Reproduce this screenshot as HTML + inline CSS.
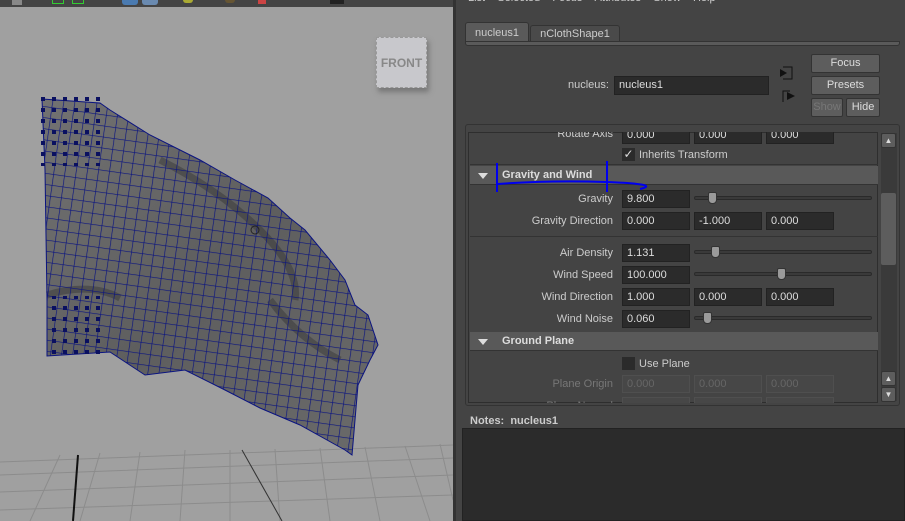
<!DOCTYPE html>
<html><head><meta charset="utf-8"><style>
*{margin:0;padding:0;box-sizing:border-box}
body{width:905px;height:521px;overflow:hidden;background:#444;font-family:"Liberation Sans",sans-serif;font-size:11px;color:#ccc;position:relative}
.a{position:absolute}
.f{position:absolute;background:#2b2b2b;border:1px solid #222;color:#ddd;height:18px;line-height:17px;padding-left:4px;font-size:11px}
.d{background:#474747;border-color:#4f4f4f;color:#666}
.l{position:absolute;text-align:right;width:150px;color:#ccc}
.btn{position:absolute;background:#5d5d5d;border:1px solid #333;border-radius:2px;text-align:center;line-height:17px;color:#ddd;height:19px}
.sl{position:absolute;height:4px;background:#3a3a3a;border:1px solid #2a2a2a;border-radius:2px}
.th{position:absolute;width:9px;height:12px;background:#9a9a9a;border:1px solid #333;border-radius:2px 2px 4px 4px}
.hd{position:absolute;left:470px;width:408px;height:19px;background:#595959;font-weight:bold;color:#ddd;line-height:19px;border-bottom:1px solid #333}
.hd i{position:absolute;left:8px;top:7px;width:0;height:0;border-left:5px solid transparent;border-right:5px solid transparent;border-top:6px solid #ddd}
.hd span{position:absolute;left:32px}
#clip{position:absolute;left:0;top:0;width:905px;height:521px;clip-path:inset(132px 27px 118px 468px)}
</style></head><body>
<div class="a" style="left:0;top:0;width:453px;height:521px;background:#a0a0a0;overflow:hidden">
<div class="a" style="left:0;top:0;width:453px;height:7px;background:#444"></div>
<div class="a" style="left:12px;top:0;width:10px;height:5px;background:#888"></div>
<div class="a" style="left:52px;top:0;width:12px;height:4px;border:1px solid #3c3;border-top:none"></div>
<div class="a" style="left:72px;top:0;width:12px;height:4px;border:1px solid #3c3;border-top:none"></div>
<div class="a" style="left:122px;top:0;width:16px;height:5px;background:#4a7ab0;border-radius:0 0 3px 3px"></div>
<div class="a" style="left:142px;top:0;width:16px;height:5px;background:#6a8ab0;border-radius:0 0 3px 3px"></div>
<div class="a" style="left:183px;top:0;width:10px;height:3px;background:#aa3;border-radius:0 0 5px 5px"></div>
<div class="a" style="left:225px;top:0;width:10px;height:3px;background:#653;border-radius:0 0 5px 5px"></div>
<div class="a" style="left:258px;top:0;width:8px;height:4px;background:#c44"></div>
<div class="a" style="left:330px;top:0;width:14px;height:4px;background:#222"></div>
<svg class="a" style="left:0;top:0" width="453" height="521">
<defs>
<pattern id="g" width="11" height="11" patternUnits="userSpaceOnUse" patternTransform="rotate(8)">
<path d="M0 0H11M0 0V11" stroke="#0a1380" stroke-width="1.3" fill="none"/></pattern>
<pattern id="dt" width="11" height="11" patternUnits="userSpaceOnUse" x="41" y="97">
<rect x="0" y="0" width="4" height="4" fill="#0a1060"/></pattern>
<linearGradient id="sh" x1="0" y1="0" x2="1" y2="1">
<stop offset="0" stop-color="#727272"/><stop offset=".5" stop-color="#5e5e5e"/><stop offset="1" stop-color="#6a6a6a"/></linearGradient>
</defs>
<g stroke="#8c8c8c" stroke-width="1">
<path d="M0 462L453 445M0 475L453 458M0 492L453 475M0 510L453 495"/>
<path d="M30 521L60 455M80 521L100 453M130 521L140 452M180 521L185 450M230 521L230 450M280 521L275 449M330 521L320 448M380 521L365 447M430 521L405 446M453 500L440 444"/>
</g>
<path d="M78 455L73 521" stroke="#111" stroke-width="2"/>
<path d="M242 450L282 521" stroke="#333" stroke-width="1"/>
<path d="M42 99L100 103L110 110L150 135L200 160L235 180L268 198L290 218L305 230L330 260L345 280L355 305L368 315L378 345L370 360L358 385L355 420L352 455L345 450L300 425L260 408L225 390L185 370L145 375L110 352L47 356L47 300L45 170Z" fill="url(#sh)"/>
<path d="M160 160Q220 190 260 230T295 300M47 295Q90 282 120 298M270 300Q300 340 340 360" stroke="#333" stroke-width="7" opacity=".45" fill="none"/>
<path d="M42 99L100 103L110 110L150 135L200 160L235 180L268 198L290 218L305 230L330 260L345 280L355 305L368 315L378 345L370 360L358 385L355 420L352 455L345 450L300 425L260 408L225 390L185 370L145 375L110 352L47 356L47 300L45 170Z" fill="url(#g)" stroke="#0a1380"/>
<rect x="40" y="96" width="64" height="70" fill="url(#dt)"/>
<rect x="45" y="296" width="62" height="62" fill="url(#dt)"/>
<circle cx="255" cy="230" r="4" fill="none" stroke="#222"/>
</svg>
<div class="a" style="left:376px;top:37px;width:51px;height:51px;background:#c8c8cc;border:1px dashed #999;box-shadow:2px 4px 5px #777;color:#888;font-weight:bold;font-size:12px;text-align:center;line-height:51px">FRONT</div>
</div>
<div class="a" style="left:453px;top:0;width:3px;height:521px;background:#333"></div>
<div class="a" style="left:468px;top:-8px;color:#ccc">List&nbsp;&nbsp;&nbsp;&nbsp;Selected&nbsp;&nbsp;&nbsp;&nbsp;Focus&nbsp;&nbsp;&nbsp;&nbsp;Attributes&nbsp;&nbsp;&nbsp;&nbsp;Show&nbsp;&nbsp;&nbsp;&nbsp;Help</div>
<div class="a" style="left:465px;top:22px;width:64px;height:20px;background:#5a5a5a;border:1px solid #333;border-bottom:none;border-radius:3px 3px 0 0;text-align:center;line-height:20px">nucleus1</div>
<div class="a" style="left:530px;top:25px;width:90px;height:17px;background:#4a4a4a;border:1px solid #333;border-bottom:none;border-radius:3px 3px 0 0;text-align:center;line-height:17px">nClothShape1</div>
<div class="a" style="left:465px;top:41px;width:435px;height:5px;background:#5a5a5a;border:1px solid #333;border-radius:0 0 3px 3px"></div>
<div class="a" style="left:568px;top:79px">nucleus:</div>
<div class="f" style="left:614px;top:76px;width:155px;height:19px">nucleus1</div>
<svg class="a" style="left:780px;top:66px" width="20" height="36"><path d="M3 1H12V13H3" fill="none" stroke="#111"/><path d="M0 3L7 7L0 11Z" fill="#111"/><path d="M10 25H3V37H10" fill="none" stroke="#111"/><path d="M7 26L15 30L7 34Z" fill="#111"/></svg>
<div class="btn" style="left:811px;top:54px;width:69px">Focus</div>
<div class="btn" style="left:811px;top:76px;width:69px">Presets</div>
<div class="btn" style="left:811px;top:98px;width:32px;color:#777">Show</div>
<div class="btn" style="left:846px;top:98px;width:34px">Hide</div>
<div class="a" style="left:465px;top:124px;width:435px;height:282px;border:1px solid #333;border-radius:3px"></div>
<div class="a" style="left:468px;top:132px;width:410px;height:271px;border:1px solid #2e2e2e"></div>
<div class="a" style="left:881px;top:133px;width:16px;height:268px;background:#3a3a3a"></div>
<div class="btn" style="left:881px;top:133px;width:15px;height:15px;line-height:13px;font-size:8px">▲</div>
<div class="a" style="left:881px;top:193px;width:15px;height:72px;background:#5d5d5d;border-radius:2px"></div>
<div class="btn" style="left:881px;top:371px;width:15px;height:15px;line-height:13px;font-size:8px">▲</div>
<div class="btn" style="left:881px;top:387px;width:15px;height:15px;line-height:13px;font-size:8px">▼</div>
<div id="clip">
<div class="l" style="left:463px;top:128px">Rotate Axis</div>
<div class="f" style="left:622px;top:126px;width:68px">0.000</div>
<div class="f" style="left:694px;top:126px;width:68px">0.000</div>
<div class="f" style="left:766px;top:126px;width:68px">0.000</div>
<div class="a" style="left:622px;top:148px;width:13px;height:13px;background:#2b2b2b;color:#ddd;font-size:12px;line-height:13px;text-align:center">✓</div>
<div class="a" style="left:639px;top:149px">Inherits Transform</div>
<div class="a" style="left:470px;top:164px;width:408px;height:1px;background:#333"></div>
<div class="hd" style="top:166px"><i></i><span>Gravity and Wind</span></div>
<div class="l" style="left:463px;top:193px">Gravity</div>
<div class="f" style="left:622px;top:190px;width:68px">9.800</div>
<div class="sl" style="left:694px;top:196px;width:178px"></div><div class="th" style="left:708px;top:192px"></div>
<div class="l" style="left:463px;top:215px">Gravity Direction</div>
<div class="f" style="left:622px;top:212px;width:68px">0.000</div>
<div class="f" style="left:694px;top:212px;width:68px">-1.000</div>
<div class="f" style="left:766px;top:212px;width:68px">0.000</div>
<div class="a" style="left:470px;top:236px;width:408px;height:1px;background:#333"></div>
<div class="l" style="left:463px;top:247px">Air Density</div>
<div class="f" style="left:622px;top:244px;width:68px">1.131</div>
<div class="sl" style="left:694px;top:250px;width:178px"></div><div class="th" style="left:711px;top:246px"></div>
<div class="l" style="left:463px;top:269px">Wind Speed</div>
<div class="f" style="left:622px;top:266px;width:68px">100.000</div>
<div class="sl" style="left:694px;top:272px;width:178px"></div><div class="th" style="left:777px;top:268px"></div>
<div class="l" style="left:463px;top:291px">Wind Direction</div>
<div class="f" style="left:622px;top:288px;width:68px">1.000</div>
<div class="f" style="left:694px;top:288px;width:68px">0.000</div>
<div class="f" style="left:766px;top:288px;width:68px">0.000</div>
<div class="l" style="left:463px;top:313px">Wind Noise</div>
<div class="f" style="left:622px;top:310px;width:68px">0.060</div>
<div class="sl" style="left:694px;top:316px;width:178px"></div><div class="th" style="left:703px;top:312px"></div>
<div class="hd" style="top:332px"><i></i><span>Ground Plane</span></div>
<div class="a" style="left:622px;top:357px;width:13px;height:13px;background:#2b2b2b"></div>
<div class="a" style="left:639px;top:358px">Use Plane</div>
<div class="l" style="left:463px;top:378px;color:#777">Plane Origin</div>
<div class="f d" style="left:622px;top:375px;width:68px">0.000</div>
<div class="f d" style="left:694px;top:375px;width:68px">0.000</div>
<div class="f d" style="left:766px;top:375px;width:68px">0.000</div>
<div class="l" style="left:463px;top:400px;color:#777">Plane Normal</div>
<div class="f d" style="left:622px;top:397px;width:68px"></div>
<div class="f d" style="left:694px;top:397px;width:68px"></div>
<div class="f d" style="left:766px;top:397px;width:68px"></div>
</div>
<svg class="a" style="left:490px;top:158px" width="160" height="35"><path d="M7 5V34M8 26Q60 22 116 24T150 31M117 3V34" stroke="#0000ee" stroke-width="2" fill="none"/></svg>
<div class="a" style="left:470px;top:415px;font-weight:bold;color:#ccc">Notes:&nbsp; nucleus1</div>
<div class="a" style="left:462px;top:428px;width:443px;height:93px;background:#2b2b2b;border:1px solid #222"></div>
</body></html>
